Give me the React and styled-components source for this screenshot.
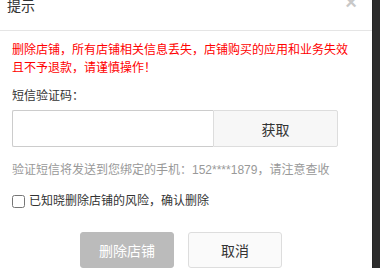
import React, { useState } from 'react'
import styled, { createGlobalStyle } from 'styled-components'

const GlobalStyle = createGlobalStyle`
    html, body {
        margin: 0;
        padding: 0;
        background: #2d2d2d;
        overflow: hidden;
    }
    * {
        box-sizing: border-box;
    }
`;

function App() {
    const [agreed, setAgreed] = useState(false)

    return (
        <>
            <GlobalStyle />
            <PageStyled>
                <ModalStyled>
                    <div className="modal-header">
                        <h3>提示</h3>
                        <span className="close">×</span>
                    </div>
                    <div className="modal-body">
                        <p className="warning">
                            删除店铺，所有店铺相关信息丢失，店铺购买的应用和业务失效且不予退款，请谨慎操作！
                        </p>
                        <label className="field-label">短信验证码：</label>
                        <div className="code-row">
                            <input type="text" />
                            <button>获取</button>
                        </div>
                        <p className="hint">验证短信将发送到您绑定的手机：152****1879，请注意查收</p>
                        <label className="agree">
                            <input type="checkbox" checked={agreed} onChange={e => setAgreed(e.target.checked)} />
                            已知晓删除店铺的风险，确认删除
                        </label>
                    </div>
                    <div className="modal-footer">
                        <ActionButton disabled={!agreed}>删除店铺</ActionButton>
                        <ActionButton $plain>取消</ActionButton>
                    </div>
                </ModalStyled>
                <Backdrop />
            </PageStyled>
        </>
    )
}

const PageStyled = styled.div`
    display: flex;
    width: 380px;
    height: 268px;
    font-family: "Liberation Sans", "Noto Sans CJK SC", sans-serif;
`;

const ModalStyled = styled.div`
    width: 372px;
    height: 268px;
    background: #fff;
    display: flex;
    flex-direction: column;
    overflow: hidden;

    .modal-header {
        height: 32px;
        border-bottom: 1px solid #e5e5e5;
        display: flex;
        justify-content: space-between;
        align-items: flex-start;
        padding: 0 15px 0 7px;

        h3 {
            margin: -1px 0 0;
            font-size: 14px;
            font-weight: 400;
            line-height: 14px;
            color: #333;
        }

        .close {
            margin-top: -8px;
            font-size: 20px;
            font-weight: 700;
            line-height: 20px;
            color: #c8c8c8;
        }
    }

    .modal-body {
        padding: 10px 20px 0 12px;
        display: flex;
        flex-direction: column;
        align-items: flex-start;
        font-size: 12px;
        line-height: 18px;

        .warning {
            margin: 0;
            color: #f00;
        }

        .field-label {
            margin-top: 10px;
            color: #333;
        }

        .code-row {
            display: flex;
            margin-top: 5px;
            width: 326px;
            height: 37px;

            input {
                width: 201px;
                height: 37px;
                border: 1px solid #ccc;
                border-right: none;
                border-radius: 2px 0 0 2px;
                outline: none;
            }

            button {
                flex: 1;
                height: 37px;
                border: 1px solid #ddd;
                border-radius: 0 2px 2px 0;
                background: #f7f7f7;
                font-family: inherit;
                font-size: 14px;
                color: #333;
            }
        }

        .hint {
            margin: 14px 0 0;
            color: #999;
            white-space: nowrap;
        }

        .agree {
            margin-top: 13px;
            display: flex;
            align-items: center;
            color: #333;

            input {
                width: 13px;
                height: 13px;
                margin: 0 4px 0 0;
            }
        }
    }

    .modal-footer {
        margin-top: 22px;
        display: flex;
        justify-content: center;
        gap: 14px;
        padding-right: 10px;
    }
`;

const ActionButton = styled.button`
    width: 94px;
    height: 36px;
    border-radius: 3px;
    font-family: inherit;
    font-size: 14px;
    border: 1px solid ${props => props.$plain ? '#ddd' : '#bbb'};
    background: ${props => props.$plain ? '#fafafa' : '#bbb'};
    color: ${props => props.$plain ? '#333' : '#fff'};
`;

const Backdrop = styled.div`
    flex: 1;
    background: #2d2d2d;
    border-left: 1px solid #262626;
`;

export default App
